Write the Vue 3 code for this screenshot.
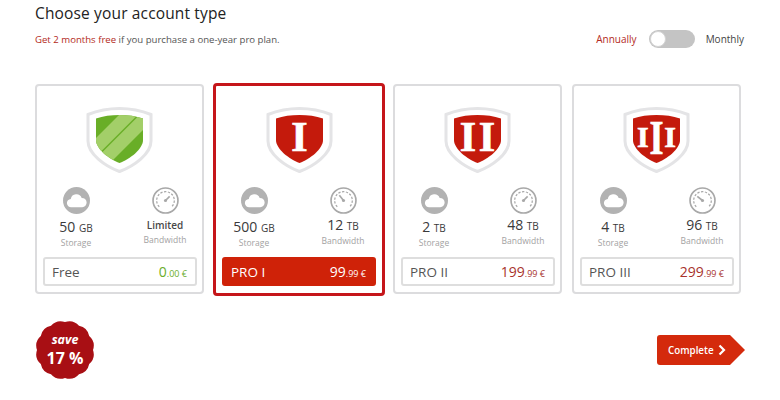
<script setup>
const plans = [
  { name: 'Free', tier: 0, storage: '50', storageUnit: 'GB', band: 'Limited', bandUnit: '', price: '0', needle: 'M13 13 L17 9' },
  { name: 'PRO I', tier: 1, storage: '500', storageUnit: 'GB', band: '12', bandUnit: 'TB', price: '99', needle: 'M13 13 L9 8', selected: true },
  { name: 'PRO II', tier: 2, storage: '2', storageUnit: 'TB', band: '48', bandUnit: 'TB', price: '199', needle: 'M13 13 L17 9' },
  { name: 'PRO III', tier: 3, storage: '4', storageUnit: 'TB', band: '96', bandUnit: 'TB', price: '299', needle: 'M13 13 L8 9' }
]

// scalloped edge of the save badge
function sealPath() {
  const n = 12
  let d = ''
  for (let i = 0; i <= n; i++) {
    const a = (i / n) * Math.PI * 2 - Math.PI / 2
    const x = (30 + 28 * Math.cos(a)).toFixed(1)
    const y = (30 + 28 * Math.sin(a)).toFixed(1)
    d += i === 0 ? `M${x} ${y}` : `A13 13 0 0 1 ${x} ${y}`
  }
  return d + 'Z'
}
const seal = sealPath()
</script>

<template>
  <div class="page">
    <h1>Choose your account type</h1>
    <div class="intro">
      <p><span class="red">Get 2 months free</span> if you purchase a one-year pro plan.</p>
      <div class="period">
        <span class="red">Annually</span>
        <span class="toggle"><i></i></span>
        <span>Monthly</span>
      </div>
    </div>

    <div class="plans">
      <div v-for="plan in plans" :key="plan.name" class="card" :class="{ selected: plan.selected }">
        <svg class="shield" width="67" height="66" viewBox="0 0 67 66">
          <defs>
            <clipPath id="free-clip">
              <path d="M33.5 8C42 8 50 9 57 11.5V33C57 42 44 52 33.5 56C23 52 10 42 10 33V11.5C17 9 25 8 33.5 8Z" />
            </clipPath>
          </defs>
          <path d="M33.5 1.5C44 1.5 55 3.5 65 7.5V34C65 47 48 59 33.5 64.5C19 59 2 47 2 34V7.5C12 3.5 23 1.5 33.5 1.5Z" fill="#fff" stroke="#e4e4e6" stroke-width="3" />
          <g v-if="plan.tier === 0" clip-path="url(#free-clip)">
            <rect x="8" y="6" width="52" height="52" fill="#69ae27" />
            <polygon points="41,0 59.5,0 0,59.5 0,41" fill="#a3cf69" />
            <polygon points="61.5,0 80,0 20,60 1.5,60" fill="#a3cf69" />
          </g>
          <template v-else>
            <path d="M33.5 8C42 8 50 9 57 11.5V33C57 42 44 52 33.5 56C23 52 10 42 10 33V11.5C17 9 25 8 33.5 8Z" fill="#c41a0c" />
            <g class="numeral">
              <text v-if="plan.tier === 1" x="33.5" y="44" font-size="42">I</text>
              <template v-if="plan.tier === 2">
                <text x="24" y="44" font-size="42">I</text>
                <text x="43" y="44" font-size="42">I</text>
              </template>
              <template v-if="plan.tier === 3">
                <text x="19.8" y="40" font-size="30">I</text>
                <text transform="translate(33.5 47) scale(0.75 1)" font-size="48">I</text>
                <text x="47.2" y="40" font-size="30">I</text>
              </template>
            </g>
          </template>
        </svg>

        <div class="stats">
          <div class="stat">
            <svg width="27" height="27" viewBox="0 0 26 26">
              <circle cx="13" cy="13" r="13" fill="#b2b2b2" />
              <path d="M8 19.5a4 4 0 0 1-.5-8a5.5 5.5 0 0 1 10.5-1a4.5 4.5 0 0 1 .5 9Z" fill="#fff" />
            </svg>
            <div class="value">{{ plan.storage }} <small>{{ plan.storageUnit }}</small></div>
            <div class="label">Storage</div>
          </div>
          <div class="stat band">
            <svg width="27" height="27" viewBox="0 0 26 26" fill="none" stroke="#a8a8a8">
              <circle cx="13" cy="13" r="12" stroke-width="1.6" />
              <path d="M7 19A8.5 8.5 0 1 1 19 19" stroke-width="1.2" stroke-dasharray="2.2 1.5" />
              <path :d="plan.needle" stroke-width="1.6" />
              <circle cx="13" cy="13" r="1.5" fill="#a8a8a8" stroke="none" />
            </svg>
            <div v-if="plan.bandUnit" class="value">{{ plan.band }} <small>{{ plan.bandUnit }}</small></div>
            <div v-else class="value limited">{{ plan.band }}</div>
            <div class="label">Bandwidth</div>
          </div>
        </div>

        <div class="price-box" :class="{ green: plan.tier === 0 }">
          <span class="plan-name">{{ plan.name }}</span>
          <span class="price">{{ plan.price }}<small>.{{ plan.tier === 0 ? '00' : '99' }} €</small></span>
        </div>
      </div>
    </div>

    <div class="footer">
      <svg class="seal" width="60" height="60" viewBox="0 0 60 60">
        <path :d="seal" fill="#a80f14" />
        <text x="30" y="24" class="seal-save">save</text>
        <text x="30" y="44" class="seal-pct">17 %</text>
      </svg>
      <button class="complete" type="button">
        Complete
        <svg width="8" height="12" viewBox="0 0 8 12" fill="none" stroke="#fff" stroke-width="2.2">
          <path d="M1.5 1.5L6 6L1.5 10.5" />
        </svg>
      </button>
    </div>
  </div>
</template>

<style>
body {
  background: #fff;
}
</style>

<style scoped>
.page {
  width: 780px;
  height: 400px;
  box-sizing: border-box;
  padding: 0 36px 0 35px;
  font-family: "Open Sans", "Liberation Sans", sans-serif;
  color: #333;
  overflow: hidden;
}

h1 {
  margin: 2px 0 0;
  font-size: 15.5px;
  line-height: 22px;
  font-weight: 400;
  letter-spacing: 0.15px;
  color: #222;
}

.intro {
  display: flex;
  justify-content: space-between;
  align-items: center;
  margin-top: 5px;
  height: 20px;
  font-size: 10px;
}

.intro p {
  margin: 0;
  font-size: 9.6px;
  color: #555;
}

.red {
  color: #b32a22;
}

.period {
  display: flex;
  align-items: center;
  color: #444;
}

.toggle {
  width: 46px;
  height: 18px;
  margin: 0 11px 0 12px;
  border-radius: 9px;
  background: #c4c4c4;
}

.toggle i {
  display: block;
  width: 14px;
  height: 14px;
  margin: 1px;
  border: 1px solid #d4d4d4;
  border-radius: 50%;
  background: #fff;
}

.plans {
  display: flex;
  align-items: flex-start;
  margin-top: 35px;
}

.card {
  flex: none;
  width: 169px;
  box-sizing: border-box;
  margin-right: 10px;
  padding: 21px 0 6px;
  border: 2px solid #dcdcde;
  border-radius: 4px;
  background: #fff;
}

.card:first-child {
  margin-right: 9px;
}

.card.selected {
  width: 172px;
  margin: -1px 8px 0 0;
  padding-bottom: 7px;
  border: 3px solid #c5161a;
}

.shield {
  display: block;
  margin: 0 auto;
}

.numeral text {
  font-family: "Liberation Serif", serif;
  font-weight: 700;
  fill: #fff;
  stroke: #fff;
  stroke-width: 0.7px;
  text-anchor: middle;
}

.stats {
  display: grid;
  grid-template-columns: 70px 70px;
  column-gap: 19px;
  height: 70px;
  margin-top: 14px;
  padding-left: 4px;
}

.selected .stats {
  padding-left: 3px;
}

.stat {
  display: flex;
  flex-direction: column;
  align-items: center;
}

.stat svg {
  display: block;
}

.value {
  margin-top: 3px;
  font-size: 14px;
  line-height: 20px;
  color: #3a3a3a;
  white-space: nowrap;
}

.value small {
  font-size: 10px;
}

.value.limited {
  font-size: 10px;
  font-weight: 600;
  color: #484848;
}

.label {
  margin-top: -2px;
  font-size: 8.5px;
  line-height: 13px;
  color: #a2a2a2;
}

.band .value {
  margin-top: 1px;
}

.price-box {
  display: flex;
  justify-content: space-between;
  align-items: center;
  box-sizing: border-box;
  width: 154px;
  height: 29px;
  margin-left: 6px;
  padding: 0 8px 0 7px;
  border: 2px solid #dedede;
  border-radius: 3px;
  background: #fff;
}

.selected .price-box {
  margin-left: 6px;
  border-color: #cf2208;
  background: #cf2208;
}

.plan-name {
  font-size: 13.5px;
  color: #555;
}

.price {
  font-size: 14px;
  color: #a8322c;
}

.price small {
  font-size: 9px;
}

.green .price {
  color: #6aad2a;
}

.selected .plan-name,
.selected .price {
  color: #fff;
}

.footer {
  display: flex;
  justify-content: space-between;
  align-items: center;
  margin-top: 24px;
}

.seal-save,
.seal-pct {
  fill: #fff;
  text-anchor: middle;
  font-weight: 700;
}

.seal-save {
  font-size: 12.5px;
  font-style: italic;
}

.seal-pct {
  font-size: 16px;
}

.complete {
  position: relative;
  display: flex;
  align-items: center;
  gap: 4px;
  width: 73px;
  height: 30px;
  margin: 0 14px 0 0;
  padding: 0 0 0 11px;
  border: 0;
  border-radius: 3px 0 0 3px;
  background: #d42a0c;
  color: #fff;
  font-family: inherit;
  font-size: 9.8px;
  font-weight: 600;
}

.complete::after {
  content: "";
  position: absolute;
  top: 0;
  left: 73px;
  border-style: solid;
  border-width: 15px 0 15px 15px;
  border-color: transparent transparent transparent #d42a0c;
}
</style>
